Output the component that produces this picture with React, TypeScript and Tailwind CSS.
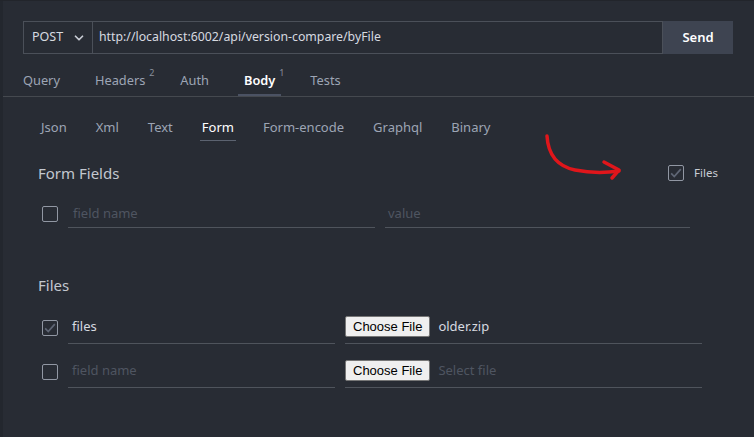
import { ChevronDown } from "lucide-react";

const font = { fontFamily: '"Noto Sans", "Open Sans", sans-serif' };

const Check = ({ checked }: { checked?: boolean }) => (
  <span className="flex h-4 w-4 shrink-0 items-center justify-center rounded-[2px] border border-[#9197a3]">
    {checked && (
      <svg viewBox="0 0 16 16" className="h-3.5 w-3.5">
        <path d="M2.5 8.5 L6 12 L13.5 3.5" fill="none" stroke="#5f6675" strokeWidth="2" />
      </svg>
    )}
  </span>
);

const ChooseFile = () => (
  <button className="h-[21px] shrink-0 rounded-[2px] border border-[#767676] bg-[#efefef] px-[7px] text-[13px] leading-none text-black [font-family:Arial,'Liberation_Sans',sans-serif]">
    Choose File
  </button>
);

const tabs = [
  { name: "Query" },
  { name: "Headers", sup: "2" },
  { name: "Auth" },
  { name: "Body", sup: "1", active: true },
  { name: "Tests" },
];

const bodyTypes = ["Json", "Xml", "Text", "Form", "Form-encode", "Graphql", "Binary"];

export default function App() {
  return (
    <div className="relative flex h-[437px] w-[754px] overflow-hidden border-t border-[#22252b] bg-[#282c34]" style={font}>
      <div className="w-[3px] shrink-0 bg-[#23272e]" />
      <div className="flex flex-1 flex-col">
        {/* url bar */}
        <div className="mt-[20px] flex h-[33px] pl-5 pr-[21px]">
          <div className="flex w-[70px] items-center justify-between border border-[#4b5059] pl-2 pr-1.5 text-[12.5px] text-[#d7dae0]">
            POST
            <ChevronDown className="h-3.5 w-3.5 text-[#c8ccd4]" strokeWidth={3} />
          </div>
          <div className="flex flex-1 items-center border-y border-r border-[#4b5059] px-1.5 text-[12.3px] text-[#d7dae0]">
            http://localhost:6002/api/version-compare/byFile
          </div>
          <button className="w-[70px] bg-[#3e4451] text-[13px] font-semibold text-white">Send</button>
        </div>

        {/* tabs */}
        <div className="mt-[9px] flex h-[34px] gap-[23px] border-b border-[#45494f] pl-[14px]">
          {tabs.map((t) => (
            <div
              key={t.name}
              className={`relative px-[6px] pt-[8px] text-[12.8px] leading-[18px] ${
                t.active ? "border-b-2 border-[#4b5263] font-semibold text-white" : "text-[#9da5b4]"
              }`}
            >
              {t.name}
              {t.sup && (
                <span className="absolute right-[-3px] top-[5px] text-[9px] leading-none font-normal text-[#8a909c]">
                  {t.sup}
                </span>
              )}
            </div>
          ))}
        </div>

        {/* body types */}
        <div className="mt-[21px] flex gap-[29px] pl-[38px] text-[13px] leading-[18px]">
          {bodyTypes.map((b) => (
            <div
              key={b}
              className={
                b === "Form"
                  ? "-mx-[2px] border-b border-[#5c6370] px-[2px] pb-[4px] text-white"
                  : "pb-[4px] text-[#9da5b4]"
              }
            >
              {b}
            </div>
          ))}
        </div>

        {/* form fields */}
        <div className="mt-[22px] flex h-[20px] items-center pl-[35px] pr-[36px]">
          <div className="flex-1 text-[15px] leading-[20px] text-[#c3c7cf]">Form Fields</div>
          <Check checked />
          <span className="ml-[10px] text-[11.5px] text-[#c8ccd4]">Files</span>
        </div>

        <div className="mt-[18px] flex items-start pl-[39px] pr-[64px]">
          <div className="mt-[5px]">
            <Check />
          </div>
          <div className="ml-[10px] flex h-[27px] flex-1 items-center border-b border-[#4f545c] pl-[5px] text-[13px] text-[#4f5561]">
            field name
          </div>
          <div className="ml-[10px] flex h-[27px] flex-1 items-center border-b border-[#4f545c] pl-[3px] text-[13px] text-[#4f5561]">
            value
          </div>
        </div>

        <div className="mt-[47px] pl-[35px] text-[15px] leading-[20px] text-[#c3c7cf]">Files</div>

        <div className="mt-[21px] flex flex-col gap-[16px] pl-[39px] pr-[52px]">
          {[
            { name: "files", file: "older.zip", checked: true },
            { name: "", file: "", checked: false },
          ].map((r, i) => (
            <div key={i} className="flex items-start">
              <div className="mt-[4px]">
                <Check checked={r.checked} />
              </div>
              <div
                className={`ml-[10px] h-[28px] w-[267px] border-b border-[#4f545c] pl-1 pt-[1px] text-[13px] leading-[19px] ${
                  r.name ? "text-[#d7dae0]" : "text-[#4f5561]"
                }`}
              >
                {r.name || "field name"}
              </div>
              <div className="ml-[10px] flex h-[28px] flex-1 items-start gap-[8px] border-b border-[#4f545c]">
                <ChooseFile />
                <span
                  className={`pt-[1px] text-[13px] leading-[19px] ${r.file ? "text-[#d7dae0]" : "text-[#4f5561]"}`}
                >
                  {r.file || "Select file"}
                </span>
              </div>
            </div>
          ))}
        </div>
      </div>

      {/* annotation arrow */}
      <svg className="pointer-events-none absolute left-0 top-0" width="754" height="437">
        <path
          d="M547 135 C548 152 556 165 575 169 C590 172 605 172 619 170"
          fill="none"
          stroke="#e0161b"
          strokeWidth="3.5"
          strokeLinecap="round"
        />
        <path
          d="M604 161 L619 169 L612 177"
          fill="none"
          stroke="#e0161b"
          strokeWidth="3.5"
          strokeLinecap="round"
          strokeLinejoin="round"
        />
      </svg>
    </div>
  );
}
